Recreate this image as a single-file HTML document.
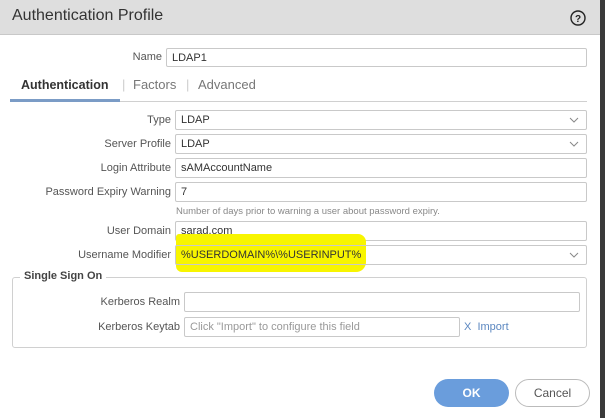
<!DOCTYPE html>
<html><head><style>
*{box-sizing:border-box;margin:0;padding:0}
body{width:605px;height:418px;overflow:hidden;background:#fff;font-family:"Liberation Sans",sans-serif;position:relative;color:#444}
.a{position:absolute}
.hdr{left:0;top:0;width:605px;height:35px;background:#dedede;border-bottom:1px solid #c8c8c8}
.title{left:12px;top:7px;font-size:16px;color:#333}
.edge{right:0;top:0;width:5px;height:418px;background:#3a3a3a}
.lbl{font-size:11px;color:#555;text-align:right;white-space:nowrap}
.in{border:1px solid #c9c9c9;border-radius:2px;background:#fff;font-size:11px;color:#333;padding-left:5px;line-height:18px}
.chev{position:absolute;right:7px;top:4px}
.tab{font-size:13px;color:#777;top:77px}
</style></head><body>
<div class="a hdr"></div>
<div class="a title">Authentication Profile</div>
<svg class="a" style="left:569px;top:9px" width="18" height="18" viewBox="0 0 18 18"><circle cx="9" cy="9" r="7" fill="none" stroke="#222" stroke-width="1.4"/><text x="9" y="13" font-size="10" text-anchor="middle" font-family="Liberation Sans" font-weight="bold" fill="#222">?</text></svg>
<div class="a edge"></div>

<div class="a lbl" style="right:443px;top:51px">Name</div>
<div class="a in" style="left:166px;top:48px;width:421px;height:19px">LDAP1</div>

<div class="a tab" style="left:21px;color:#333;font-weight:bold;font-size:12.5px;top:78px">Authentication</div>
<div class="a tab" style="left:122px;color:#ccc">|</div>
<div class="a tab" style="left:133px">Factors</div>
<div class="a tab" style="left:186px;color:#ccc">|</div>
<div class="a tab" style="left:198px">Advanced</div>
<div class="a" style="left:10px;top:101px;width:577px;height:1px;background:#d0d0d0"></div>
<div class="a" style="left:10px;top:99px;width:110px;height:3px;background:#7b9cc6"></div>

<div class="a lbl" style="right:434px;top:114px">Type</div>
<div class="a in" style="left:175px;top:110px;width:412px;height:20px">LDAP<svg class="chev" width="10" height="10"><path d="M1 3l4 4 4-4" fill="none" stroke="#888"/></svg></div>
<div class="a lbl" style="right:434px;top:138px">Server Profile</div>
<div class="a in" style="left:175px;top:134px;width:412px;height:20px">LDAP<svg class="chev" width="10" height="10"><path d="M1 3l4 4 4-4" fill="none" stroke="#888"/></svg></div>
<div class="a lbl" style="right:434px;top:162px">Login Attribute</div>
<div class="a in" style="left:175px;top:158px;width:412px;height:20px">sAMAccountName</div>
<div class="a lbl" style="right:434px;top:186px">Password Expiry Warning</div>
<div class="a in" style="left:175px;top:182px;width:412px;height:20px">7</div>
<div class="a" style="left:176px;top:206px;font-size:9.5px;color:#888">Number of days prior to warning a user about password expiry.</div>
<div class="a lbl" style="right:434px;top:225px">User Domain</div>
<div class="a in" style="left:175px;top:221px;width:412px;height:20px">sarad.com</div>
<div class="a" style="left:176px;top:234px;width:190px;height:38px;background:#f8f500;border-radius:3px 8px 10px 6px"></div>
<div class="a lbl" style="right:434px;top:249px">Username Modifier</div>
<div class="a in" style="left:175px;top:245px;width:412px;height:20px;background:transparent">%USERDOMAIN%\%USERINPUT%<svg class="chev" width="10" height="10"><path d="M1 3l4 4 4-4" fill="none" stroke="#888"/></svg></div>

<div class="a" style="left:12px;top:277px;width:575px;height:71px;border:1px solid #d0d0d0;border-radius:3px"></div>
<div class="a" style="left:20px;top:270px;background:#fff;padding:0 4px;font-size:11px;font-weight:bold;color:#444">Single Sign On</div>
<div class="a lbl" style="right:425px;top:296px">Kerberos Realm</div>
<div class="a in" style="left:184px;top:292px;width:396px;height:20px"></div>
<div class="a lbl" style="right:425px;top:321px">Kerberos Keytab</div>
<div class="a in" style="left:184px;top:317px;width:276px;height:20px;color:#999">Click "Import" to configure this field</div>
<div class="a" style="left:464px;top:321px;font-size:11px;color:#5b87c0">X&nbsp; Import</div>

<div class="a" style="left:434px;top:379px;width:75px;height:28px;border-radius:14px;background:#6a9ddc;color:#fff;font-size:12px;font-weight:bold;text-align:center;line-height:28px">OK</div>
<div class="a" style="left:515px;top:379px;width:75px;height:28px;border-radius:14px;border:1px solid #bbb;background:#fff;color:#555;font-size:12px;text-align:center;line-height:26px">Cancel</div>
</body></html>
